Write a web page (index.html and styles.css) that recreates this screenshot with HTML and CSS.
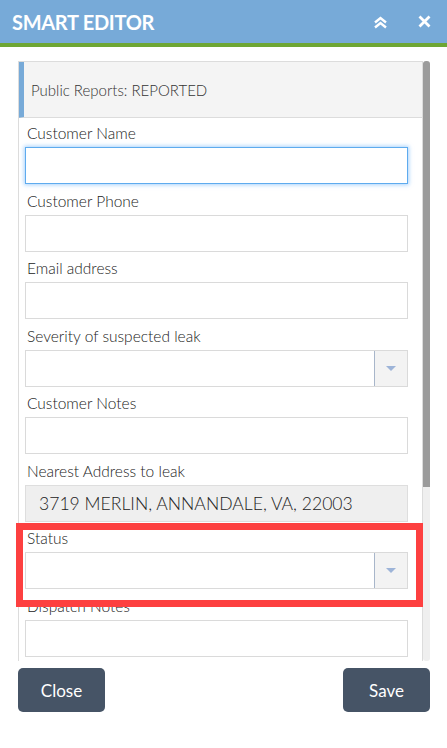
FILE: index.html
```html
<!DOCTYPE html>
<html>
<head>
<meta charset="utf-8">
<link rel="stylesheet" href="styles.css">
</head>
<body>
<div class="titlebar">
  <div class="title">SMART EDITOR</div>
  <div class="tools">
    <svg class="ic-up" width="15" height="13" viewBox="0 0 15 13"><path d="M2 6.5 L7.5 2 L13 6.5 M2 11.5 L7.5 7 L13 11.5" fill="none" stroke="#fff" stroke-width="2.4"/></svg>
    <svg class="ic-x" width="13" height="13" viewBox="0 0 13 13"><path d="M1.5 1.5 L11.5 11.5 M11.5 1.5 L1.5 11.5" fill="none" stroke="#fff" stroke-width="2.8"/></svg>
  </div>
</div>
<div class="main">
  <div class="panelwrap">
    <div class="panel">
      <div class="layerhead">Public Reports: REPORTED</div>
      <div class="fields">
        <div class="field"><div class="label">Customer Name</div><div class="input focus"></div></div>
        <div class="field"><div class="label">Customer Phone</div><div class="input"></div></div>
        <div class="field"><div class="label">Email address</div><div class="input"></div></div>
        <div class="field"><div class="label">Severity of suspected leak</div><div class="input select"><span class="dd"><span class="tri"></span></span></div></div>
        <div class="field"><div class="label">Customer Notes</div><div class="input"></div></div>
        <div class="field"><div class="label">Nearest Address to leak</div><div class="input readonly">3719 MERLIN, ANNANDALE, VA, 22003</div></div>
        <div class="field"><div class="label">Status</div><div class="input select"><span class="dd"><span class="tri"></span></span></div></div>
        <div class="field"><div class="label">Dispatch Notes</div><div class="input"></div></div>
      </div>
    </div>
    <div class="scrollbar"><div class="thumb"></div><div class="track"></div></div>
  </div>
  <div class="buttons">
    <div class="btn">Close</div>
    <div class="btn">Save</div>
  </div>
</div>
<div class="highlight"></div>
</body>
</html>
```
FILE: styles.css
```css
html, body { margin: 0; padding: 0; background: #fff; }
body { font-family: Lato, "Open Sans", sans-serif; font-weight: 300; color: #333; width: 447px; height: 748px; position: relative; overflow: hidden; }
.titlebar { height: 43px; background: #77aad8; border-bottom: 4px solid #6ea634; display: flex; align-items: center; justify-content: space-between; padding: 0 16px 0 12px; }
.title { color: #fff; font-weight: 700; font-size: 20px; letter-spacing: -0.3px; }
.tools { display: flex; align-items: center; gap: 30px; }
.ic-up { margin-top: 1px; }
.main { padding: 14px 17px 0 18px; }
.panelwrap { display: flex; height: 600px; }
.panel { flex: 1; border: 1px solid #dcdcdc; border-bottom: none; overflow: hidden; }
.layerhead { height: 55px; background: #f4f4f4; border-bottom: 1px solid #dcdcdc; border-left: 6px solid #77aad8; margin-left: -1px; padding-left: 7px; display: flex; align-items: center; font-size: 15px; color: #333; }
.fields { padding: 5px 14px 0 6px; }
.field { margin-bottom: 6.5px; }
.label { height: 20px; line-height: 20px; font-size: 15.5px; padding-left: 2px; margin-bottom: 4px; color: #222; }
.input { height: 37px; box-sizing: border-box; border: 1px solid #dadada; background: #fff; position: relative; }
.input.focus { border-color: #5eabee; box-shadow: 0 0 4px 1px rgba(110,180,250,0.6); }
.input.select .dd { position: absolute; right: 0; top: 0; bottom: 0; width: 32px; background: #f3f3f3; border-left: 1px solid #a8b6ca; display: flex; align-items: center; justify-content: center; }
.tri { width: 0; height: 0; border-left: 5px solid transparent; border-right: 5px solid transparent; border-top: 5px solid #9db4d8; }
.input.readonly { background: #efefef; border-color: #dedede; font-size: 17.6px; line-height: 35px; padding-left: 13px; color: #222; }
.scrollbar { width: 7px; display: flex; flex-direction: column; }
.thumb { height: 426px; background: #9b9b9b; border-radius: 3px 3px 0 0; }
.track { flex: 1; background: #efefef; border-radius: 0 0 3px 3px; }
.buttons { display: flex; justify-content: space-between; margin-top: 7px; }
.btn { width: 87px; height: 44px; background: #465466; color: #fff; border-radius: 5px; display: flex; align-items: center; justify-content: center; font-size: 17px; font-weight: 400; }
.highlight { position: absolute; left: 16px; top: 523px; width: 407px; height: 84px; box-sizing: border-box; border: 7px solid #fd4040; }
```
